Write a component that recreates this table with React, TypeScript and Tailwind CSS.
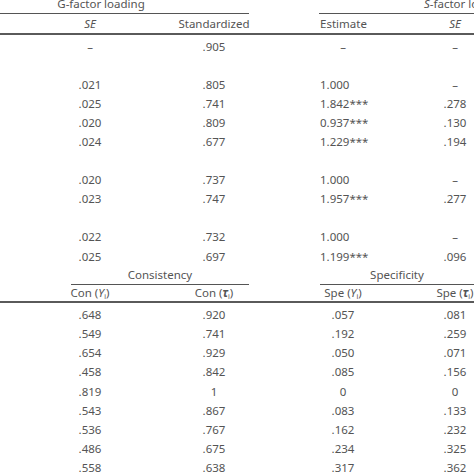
import React from "react";

const grid = "grid grid-cols-[30px_120px_128px_42px_46px_178px] items-center";

type RowData = [string, string, string, string];

const loadings: (RowData | null)[] = [
  ["–", ".905", "–", "–"],
  null,
  [".021", ".805", "1.000", "–"],
  [".025", ".741", "1.842***", ".278"],
  [".020", ".809", "0.937***", ".130"],
  [".024", ".677", "1.229***", ".194"],
  null,
  [".020", ".737", "1.000", "–"],
  [".023", ".747", "1.957***", ".277"],
  null,
  [".022", ".732", "1.000", "–"],
  [".025", ".697", "1.199***", ".096"],
];

const consistency: RowData[] = [
  [".648", ".920", ".057", ".081"],
  [".549", ".741", ".192", ".259"],
  [".654", ".929", ".050", ".071"],
  [".458", ".842", ".085", ".156"],
  [".819", "1", "0", "0"],
  [".543", ".867", ".083", ".133"],
  [".536", ".767", ".162", ".232"],
  [".486", ".675", ".234", ".325"],
  [".558", ".638", ".317", ".362"],
];

function Row({ row, estimateCol }: { row: RowData | null; estimateCol?: boolean }) {
  if (!row) return <div className="h-[19.1px]" />;
  const [a, b, c, d] = row;
  const cLeft = estimateCol && c !== "–";
  return (
    <div className={`${grid} h-[19.1px]`}>
      <span />
      <span className="text-center">{a}</span>
      <span className="text-center">{b}</span>
      <span />
      <span className={cLeft ? "text-left whitespace-nowrap" : "text-center whitespace-nowrap"}>{c}</span>
      <span className="text-center">{d}</span>
    </div>
  );
}

export default function App() {
  return (
    <div className="w-[474px] h-[474px] overflow-hidden bg-white text-[11.5px] leading-[13px] text-[#545454] font-['Noto_Sans',sans-serif]">
      {/* spanning headers */}
      <div className="flex h-[14px]">
        <div className="w-[249px] shrink-0 border-b border-[#555] flex justify-center pr-[47px]">
          <span className="-mt-[3px] whitespace-nowrap">G-factor loading</span>
        </div>
        <div className="ml-[70px] w-[300px] shrink-0 border-b border-[#555]">
          <span className="block -mt-[3px] pl-[105px] whitespace-nowrap">
            <i>S</i>-factor loading
          </span>
        </div>
      </div>

      <div className={`${grid} h-[21px] border-b-2 border-[#5a5a5a]`}>
        <span />
        <span className="text-center italic">SE</span>
        <span className="text-center">Standardized</span>
        <span />
        <span className="text-left">Estimate</span>
        <span className="text-center italic">SE</span>
      </div>

      <div className="pt-[1.5px]">
        {loadings.map((r, i) => (
          <Row key={i} row={r} estimateCol />
        ))}
      </div>

      {/* second block */}
      <div className="flex h-[19px]">
        <div className="ml-[71px] w-[178px] shrink-0 border-b border-[#555] flex items-center justify-center">
          Consistency
        </div>
        <div className="ml-[71px] w-[154px] shrink-0 border-b border-[#555] flex items-center justify-center">
          Specificity
        </div>
      </div>

      <div className={`${grid} h-[18px] border-b-2 border-[#5a5a5a]`}>
        <span />
        <span className="text-center whitespace-nowrap">
          Con (<i>Y</i><sub className="text-[7px]">i</sub>)
        </span>
        <span className="text-center whitespace-nowrap">
          Con (<i className="font-bold">τ</i><sub className="text-[7px]">i</sub>)
        </span>
        <span />
        <span className="text-center whitespace-nowrap">
          Spe (<i>Y</i><sub className="text-[7px]">i</sub>)
        </span>
        <span className="text-center whitespace-nowrap">
          Spe (<i className="font-bold">τ</i><sub className="text-[7px]">i</sub>)
        </span>
      </div>

      <div className="pt-[2.5px]">
        {consistency.map((r, i) => (
          <Row key={i} row={r} />
        ))}
      </div>
    </div>
  );
}
